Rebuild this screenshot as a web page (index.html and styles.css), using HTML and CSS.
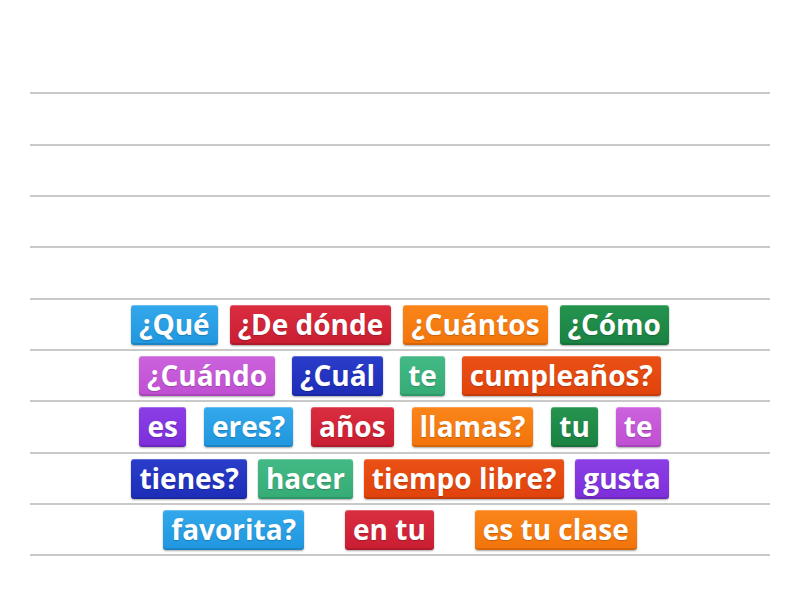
FILE: index.html
```html
<!DOCTYPE html>
<html lang="es">
<head>
<meta charset="utf-8">
<title>Ordenar palabras</title>
<link rel="stylesheet" href="styles.css">
</head>
<body>
<div class="board">
  <div class="row"></div>
  <div class="row"></div>
  <div class="row"></div>
  <div class="row"></div>
  <div class="row"></div>
  <div class="row gap-a">
    <span class="tile blue">¿Qué</span>
    <span class="tile red">¿De dónde</span>
    <span class="tile orange">¿Cuántos</span>
    <span class="tile green">¿Cómo</span>
  </div>
  <div class="row gap-b">
    <span class="tile magenta">¿Cuándo</span>
    <span class="tile navy">¿Cuál</span>
    <span class="tile teal">te</span>
    <span class="tile redorange">cumpleaños?</span>
  </div>
  <div class="row gap-c">
    <span class="tile violet">es</span>
    <span class="tile blue">eres?</span>
    <span class="tile red">años</span>
    <span class="tile orange">llamas?</span>
    <span class="tile green">tu</span>
    <span class="tile magenta">te</span>
  </div>
  <div class="row gap-d">
    <span class="tile navy">tienes?</span>
    <span class="tile teal">hacer</span>
    <span class="tile redorange">tiempo libre?</span>
    <span class="tile violet">gusta</span>
  </div>
  <div class="row gap-e">
    <span class="tile blue">favorita?</span>
    <span class="tile red">en tu</span>
    <span class="tile orange">es tu clase</span>
  </div>
</div>
</body>
</html>
```
FILE: styles.css
```css
* { box-sizing: border-box; }
html, body {
  margin: 0;
  padding: 0;
  background: #ffffff;
  font-family: "Open Sans", "Noto Sans", sans-serif;
}
.board {
  margin: 43px 30px 0;
}
.row {
  height: 51.33px;
  border-bottom: 2px solid #c9c9c9;
  display: flex;
  justify-content: center;
  align-items: center;
  padding-top: 1px;
}
.gap-a { gap: 12px; }
.gap-b { gap: 17px; }
.gap-c { gap: 18px; }
.gap-d { gap: 11px; }
.gap-e { gap: 41px; }
.tile {
  display: inline-block;
  height: 40px;
  line-height: 39px;
  padding: 0 8px;
  font-size: 28px;
  font-weight: 700;
  color: #ffffff;
  border-radius: 3px;
  white-space: nowrap;
  box-shadow: 0 1px 2px rgba(0, 0, 0, 0.35), inset 0 -2px 0 rgba(0, 0, 0, 0.12), inset 0 1px 0 rgba(255, 255, 255, 0.25);
  text-shadow: 0 1px 1px rgba(0, 0, 0, 0.2);
}
.blue { background: linear-gradient(#33a8ec, #1f96de); }
.red { background: linear-gradient(#da2d40, #c91d31); }
.orange { background: linear-gradient(#fa851a, #f2740a); }
.green { background: linear-gradient(#25944f, #1a8142); }
.magenta { background: linear-gradient(#cc62dd, #bf4fd2); }
.navy { background: linear-gradient(#2a3dc9, #1d2db8); }
.teal { background: linear-gradient(#43ba85, #35ab76); }
.redorange { background: linear-gradient(#ea5115, #e0420b); }
.violet { background: linear-gradient(#8c3ee6, #7c2ed9); }
```
